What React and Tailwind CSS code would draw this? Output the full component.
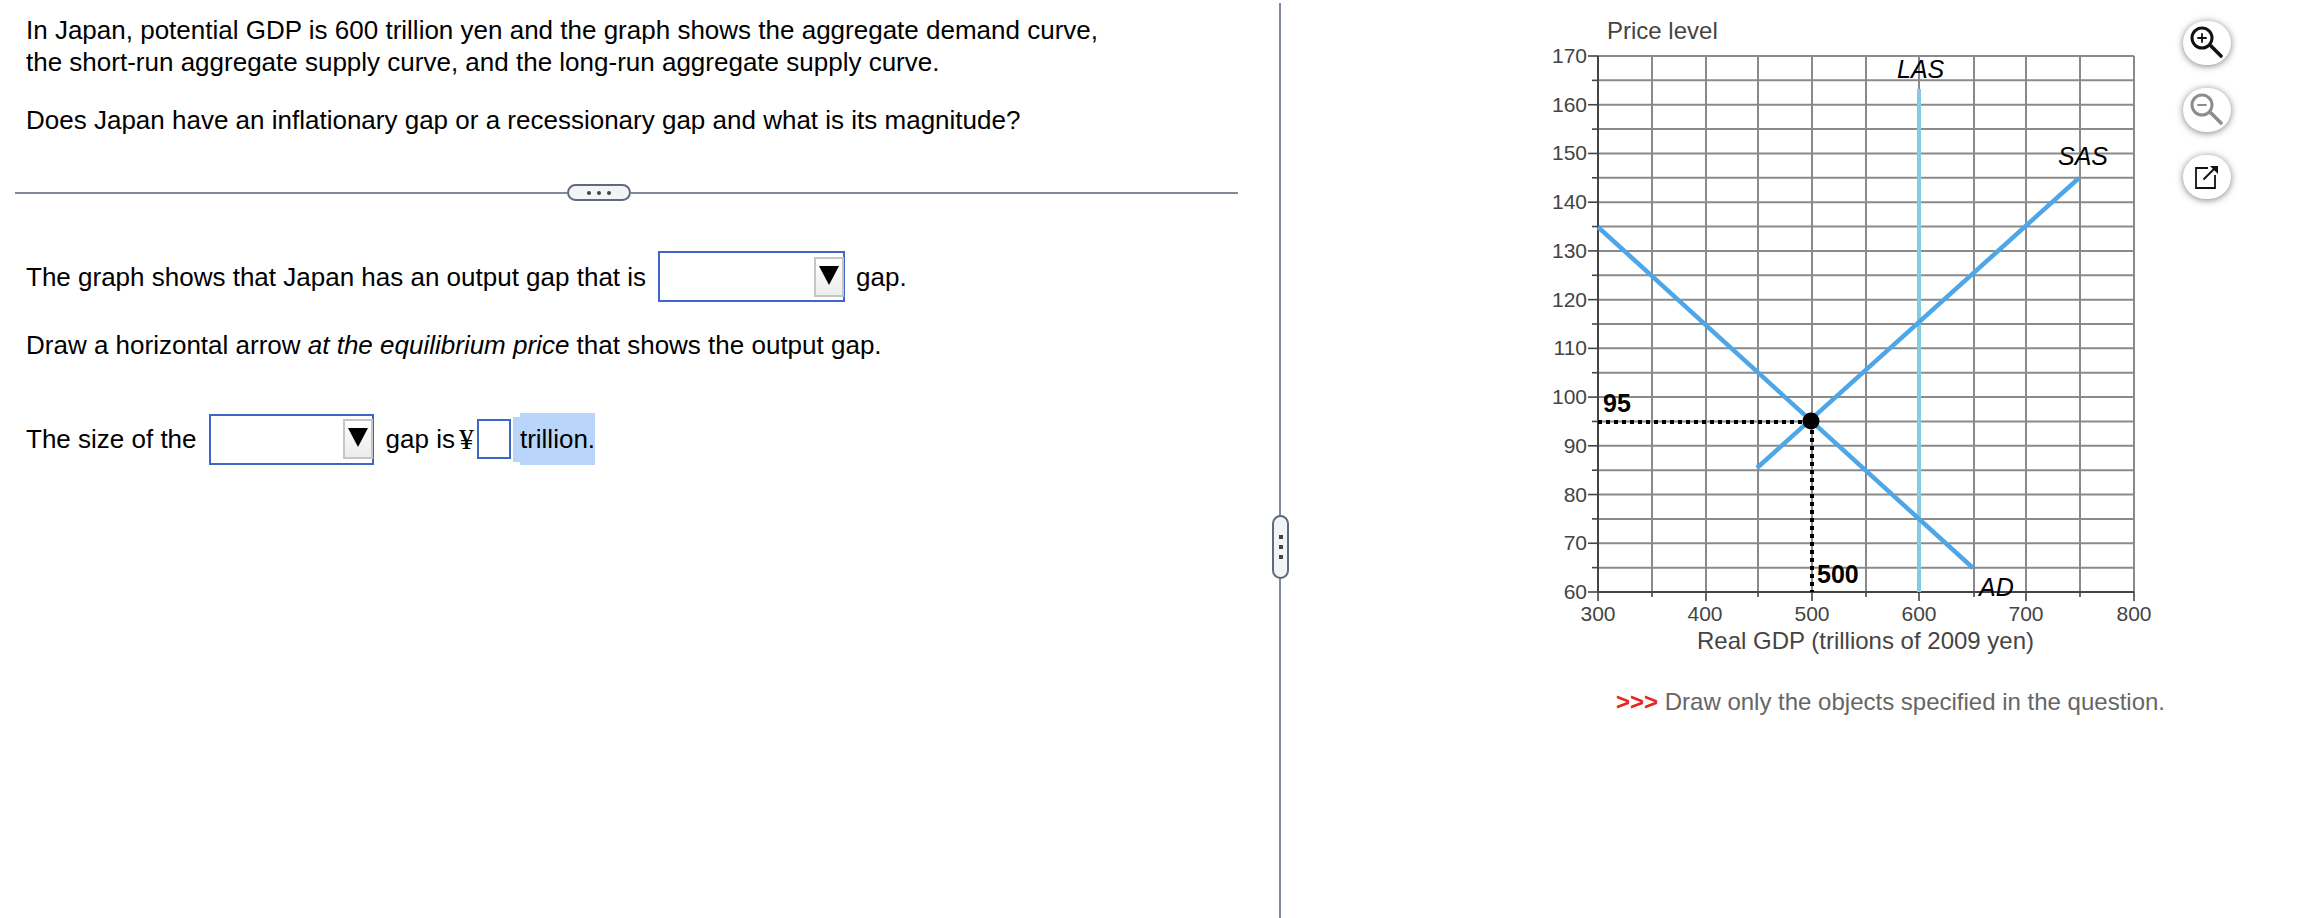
const font = { fontFamily: '"Liberation Sans", Arial, sans-serif' }

const xGrid = [1598, 1652, 1706, 1758, 1812, 1866, 1919, 1974, 2026, 2080, 2134]
const yLabels = [170, 160, 150, 140, 130, 120, 110, 100, 90, 80, 70, 60]
const yGrid = Array.from({ length: 23 }, (_, i) => 56 + (i * 536) / 22)
const xLabels = [
  { x: 1598, t: '300' },
  { x: 1705, t: '400' },
  { x: 1812, t: '500' },
  { x: 1919, t: '600' },
  { x: 2026, t: '700' },
  { x: 2134, t: '800' }
]

function Chart() {
  return (
    <svg width="640" height="660" viewBox="1540 0 640 660" className="block" style={font}>
      {xGrid.slice(1).map((x) => (
        <line key={x} x1={x} y1="56" x2={x} y2="592" stroke="#8a8a8a" strokeWidth="2" />
      ))}
      {yGrid.slice(0, -1).map((y) => (
        <line key={y} x1="1598" y1={y} x2="2134" y2={y} stroke="#8a8a8a" strokeWidth="2" />
      ))}

      {/* axes */}
      <line x1="1598" y1="56" x2="1598" y2="593" stroke="#444" strokeWidth="2" />
      <line x1="1597" y1="592" x2="2134" y2="592" stroke="#444" strokeWidth="2" />
      {yGrid.map((y, i) => (
        <line key={y} x1={i % 2 === 0 ? 1588 : 1592} y1={y} x2="1598" y2={y} stroke="#444" strokeWidth="1.6" />
      ))}
      {xGrid.map((x, i) => (
        <line key={x} x1={x} y1="592" x2={x} y2={i % 2 === 0 ? 601 : 597} stroke="#444" strokeWidth="1.6" />
      ))}

      <text x="1607" y="39" fontSize="24" fill="#444">Price level</text>
      {yLabels.map((v, i) => (
        <text key={v} x="1587" y={56 + (i * 536) / 11 + 7} fontSize="21" fill="#444" textAnchor="end">{v}</text>
      ))}
      {xLabels.map((l) => (
        <text key={l.t} x={l.x} y="621" fontSize="21" fill="#444" textAnchor="middle">{l.t}</text>
      ))}
      <text x="1697" y="649" fontSize="24" fill="#444">Real GDP (trillions of 2009 yen)</text>

      {/* curves */}
      <line x1="1919" y1="89" x2="1919" y2="592" stroke="#84cbe0" strokeWidth="4" />
      <line x1="1598" y1="227" x2="1973" y2="568" stroke="#4da6e8" strokeWidth="4.5" />
      <line x1="1757" y1="468" x2="2079" y2="178" stroke="#4da6e8" strokeWidth="4.5" />

      {/* equilibrium */}
      <line x1="1598" y1="422" x2="1812" y2="422" stroke="#000" strokeWidth="4" strokeDasharray="4 4" />
      <line x1="1812" y1="422" x2="1812" y2="592" stroke="#000" strokeWidth="4" strokeDasharray="4 4" />
      <circle cx="1811" cy="421" r="8.5" fill="#000" />
      <text x="1603" y="412" fontSize="25" fontWeight="700" fill="#000">95</text>
      <text x="1817" y="583" fontSize="25" fontWeight="700" fill="#000">500</text>

      <text x="1897" y="78" fontSize="25" fontStyle="italic" fill="#000">LAS</text>
      <text x="2058" y="165" fontSize="25" fontStyle="italic" fill="#000">SAS</text>
      <text x="1979" y="596" fontSize="25" fontStyle="italic" fill="#000">AD</text>
    </svg>
  )
}

function Dropdown({ width }) {
  return (
    <div className={`${width} h-[51px] shrink-0 border-2 border-[#3e66c4] bg-white flex items-center justify-end`}>
      <div className="w-[30px] h-[40px] -mr-px border-2 border-[#c6c6c6] bg-gradient-to-b from-white to-[#ececec] flex items-start justify-center pt-[6px]">
        <svg width="20" height="20" viewBox="0 0 20 20">
          <polygon points="0,1 20,1 10,20" fill="#000" />
        </svg>
      </div>
    </div>
  )
}

function ZoomIcon({ minus, color }) {
  return (
    <svg width="34" height="34" viewBox="0 0 34 34" fill="none" stroke={color} strokeLinecap="round">
      <circle cx="12" cy="12" r="10" strokeWidth="3" />
      <line x1="21" y1="20" x2="31" y2="30" strokeWidth="3.6" />
      <line x1="8" y1="12" x2="16" y2="12" strokeWidth="1.8" />
      {!minus && <line x1="12" y1="8" x2="12" y2="16" strokeWidth="1.8" />}
    </svg>
  )
}

function ToolButton({ children }) {
  return (
    <button className="w-12 h-[44px] rounded-full bg-white shadow-[0_1px_7px_rgba(0,0,0,0.5)] flex items-center justify-center">
      {children}
    </button>
  )
}

export default function App() {
  return (
    <div className="w-full h-screen bg-white text-black flex overflow-hidden text-[26px] leading-[32px]" style={font}>
      {/* Question panel */}
      <div className="w-[1279px] shrink-0 flex flex-col pt-[14px]">
        <div className="px-[26px]">
          <p>
            In Japan, potential GDP is 600 trillion yen and the graph shows the aggregate demand curve,
            <br />
            the short-run aggregate supply curve, and the long-run aggregate supply curve.
          </p>
          <p className="mt-[26px]">Does Japan have an inflationary gap or a recessionary gap and what is its magnitude?</p>
        </div>

        <div className="mt-[48px] ml-[15px] w-[1223px] flex items-center">
          <div className="w-[552px] h-[2px] bg-[#808a9c]" />
          <div className="w-[64px] h-[17px] rounded-full border-2 border-[#5f6b7c] bg-[#f3f4f7] flex items-center justify-center gap-[6px]">
            <span className="w-1 h-1 rounded-full bg-[#444]" />
            <span className="w-1 h-1 rounded-full bg-[#444]" />
            <span className="w-1 h-1 rounded-full bg-[#444]" />
          </div>
          <div className="flex-1 h-[2px] bg-[#808a9c]" />
        </div>

        <div className="px-[26px]">
          <div className="mt-[50px] flex items-center">
            <span>The graph shows that Japan has an output gap that is</span>
            <div className="ml-[12px]"><Dropdown width="w-[187px]" /></div>
            <span className="ml-[11px]">gap.</span>
          </div>
          <p className="mt-[27px]">
            Draw a horizontal arrow <em>at the equilibrium price</em> that shows the output gap.
          </p>
          <div className="mt-[52px] flex items-center">
            <span>The size of the</span>
            <div className="ml-[12px]"><Dropdown width="w-[165px]" /></div>
            <span className="ml-[12px]">gap is</span>
            <span className="ml-[4px] text-[30px]" style={{ fontFamily: '"Liberation Serif", serif' }}>¥</span>
            <div className="ml-[3px] w-[34px] h-[40px] border-2 border-[#3e66c4] bg-white" />
            <div className="ml-[2px] w-[7px] h-[45px] bg-[#b9d5f9]" />
            <div className="w-[75px] h-[52px] bg-[#b9d5f9] flex items-center whitespace-nowrap">trillion.</div>
          </div>
        </div>
      </div>

      {/* Divider */}
      <div className="w-[2px] shrink-0 mt-[3px] bg-[#808a9c] relative">
        <div className="absolute left-[-7px] top-[512px] w-[17px] h-[64px] rounded-full border-2 border-[#5f6b7c] bg-[#f3f4f7] flex flex-col items-center justify-center gap-[6px]">
          <span className="w-1 h-1 bg-[#444]" />
          <span className="w-1 h-1 bg-[#444]" />
          <span className="w-1 h-1 bg-[#444]" />
        </div>
      </div>

      {/* Graph panel */}
      <div className="flex-1 flex pl-[259px]">
        <div className="w-[643px] shrink-0">
          <Chart />
          <p className="ml-[76px] mt-[26px] text-[24px] text-[#666]">
            <span className="text-[#e8261c] font-bold">&gt;&gt;&gt;</span> Draw only the objects specified in the question.
          </p>
        </div>
        <div className="flex flex-col gap-[23px] pt-[21px]">
          <ToolButton><ZoomIcon color="#111" /></ToolButton>
          <ToolButton><ZoomIcon minus color="#8d8d8d" /></ToolButton>
          <ToolButton>
            <svg width="26" height="26" viewBox="0 0 26 26" fill="none" stroke="#111">
              <path d="M14 4H2v20h19V11" strokeWidth="1.8" />
              <line x1="9.5" y1="15.5" x2="20" y2="5" strokeWidth="2" />
              <polygon points="16,2 24,2 24,10" fill="#111" stroke="none" />
            </svg>
          </ToolButton>
        </div>
      </div>
    </div>
  )
}
